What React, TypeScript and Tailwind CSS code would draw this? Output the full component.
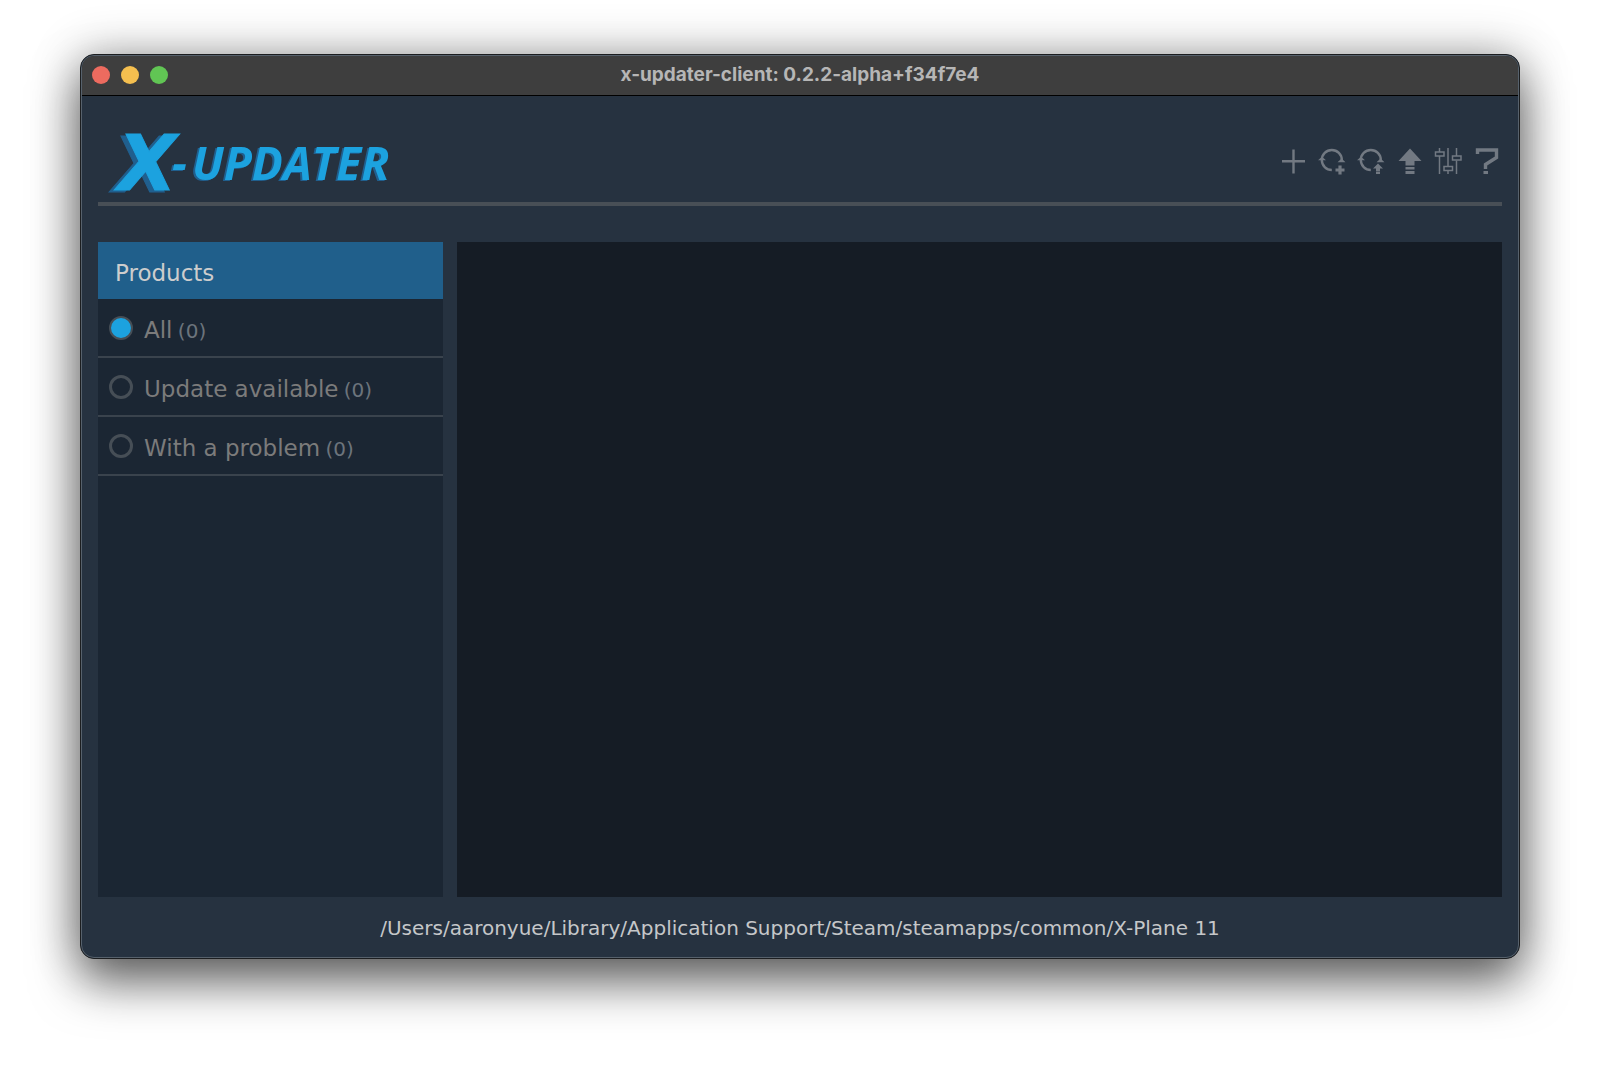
import type { ReactNode } from 'react';

const filters = [
  { id: 'all', label: 'All', count: 0 },
  { id: 'update', label: 'Update available', count: 0 },
  { id: 'problem', label: 'With a problem', count: 0 },
];

function ToolButton({ label, children }: { label: string; children: ReactNode }) {
  return (
    <button type="button" aria-label={label} title={label} className="h-8 w-8">
      <svg viewBox="0 0 32 32" className="h-8 w-8" fill="none" stroke="#727982">
        {children}
      </svg>
    </button>
  );
}

// Open circle with arrow heads on both sides, shared by the two refresh buttons
function CycleArrows() {
  return (
    <g>
      <path d="M7.8 15a10 10 0 0 1 20 0M7.8 15a10 10 0 0 0 10 10" strokeWidth="2.4" />
      <path d="M4 15.2h8L8 11.8zM23.5 17.3h8L27.6 13.5z" fill="#727982" stroke="none" />
    </g>
  );
}

function Logo() {
  return (
    <svg viewBox="0 0 300 82" className="h-[82px] w-[300px] overflow-visible" role="img" aria-label="X-Updater">
      <g fill="#1ca2df" fontWeight="700" fontStyle="italic">
        <text x="20" y="70" fontSize="76" fontFamily="DejaVu Sans, sans-serif" stroke="#1ca2df" strokeWidth="1" className="drop-shadow-[-5px_2px_0_#205f8e]">X</text>
        <g fontSize="46" fontFamily="Open Sans, sans-serif" className="drop-shadow-[-2px_1px_0_#205f8e]">
          <text x="74" y="60">-</text>
          <text x="94" y="60">UPDATER</text>
        </g>
      </g>
    </svg>
  );
}

export default function App() {
  return (
    <div className="flex min-h-screen flex-col bg-white px-20 pt-[54px] pb-[106px] font-['DejaVu_Sans',sans-serif]">
      <div className="flex flex-1 flex-col overflow-hidden rounded-[14px] border border-[#1c1e20] bg-[#263240] shadow-[0_24px_48px_rgba(0,0,0,0.55),0_0_48px_rgba(0,0,0,0.3)]">
        <div className="flex flex-1 flex-col rounded-[13px] border border-[#56616c]">
          {/* Title bar */}
          <div className="grid h-10 grid-cols-[1fr_auto_1fr] items-center rounded-t-xl border-b border-black bg-[#3e3e3e] px-[10px] pb-0.5">
            <div className="flex gap-[11px]">
              <button type="button" aria-label="Close" className="h-[18px] w-[18px] rounded-full bg-[#ed6b5f]" />
              <button type="button" aria-label="Minimize" className="h-[18px] w-[18px] rounded-full bg-[#f5bf4f]" />
              <button type="button" aria-label="Zoom" className="h-[18px] w-[18px] rounded-full bg-[#61c554]" />
            </div>
            <h1 className="font-['Inter',sans-serif] text-[19px] leading-6 font-bold text-[#b6b6b6]">
              x-updater-client: 0.2.2-alpha+f34f7e4
            </h1>
          </div>

          <div className="flex flex-1 flex-col px-4">
            <header className="flex h-[110px] items-center justify-between border-b-4 border-[#484f56] pt-6">
              <Logo />
              <div className="flex gap-[7px]">
                <ToolButton label="Add product">
                  <path d="M7 16.2h23M18.5 4.5v24" strokeWidth="2.4" />
                </ToolButton>
                <ToolButton label="Check for new products">
                  <CycleArrows />
                  <path d="M26 20.5v9M21.5 25h9" strokeWidth="3.2" />
                </ToolButton>
                <ToolButton label="Check for updates">
                  <CycleArrows />
                  <path d="M25 18.5l5 5h-3v2.5h-4v-2.5h-3zM23 26.5h4v2.5h-4z" fill="#727982" stroke="none" />
                </ToolButton>
                <ToolButton label="Update">
                  <path d="M18 3.5L29.5 16H22.5v4.5h-9V16H6.5zM13.5 22h9v2.5h-9zM13.5 26h9v3h-9z" fill="#727982" stroke="none" />
                </ToolButton>
                <ToolButton label="Settings">
                  <path d="M8.5 3v4M8.5 11v18M17 3v18M17 25.5v3.5M25.5 3v8M25.5 15.5v13.5" strokeWidth="1.5" />
                  <path d="M4.5 7h8.5v4H4.5zM13 21.5h8.5v4H13zM21.5 11h8.5v4h-8.5z" strokeWidth="1.5" />
                </ToolButton>
                <ToolButton label="Help">
                  <path d="M7.5 9V5h19v7.5l-11 7v4.5" strokeWidth="3.4" />
                  <path d="M13.5 26h4.5v3h-4.5z" fill="#727982" stroke="none" />
                </ToolButton>
              </div>
            </header>

            <div className="mt-9 flex flex-1 gap-[14px]">
              <aside className="w-[345px] bg-[#1b2633]">
                <h2 className="flex h-[57px] items-center bg-[#205f8b] px-[17px] pt-1 text-[23px] leading-7 text-[#cdcdcd]">
                  Products
                </h2>
                {filters.map((filter, idx) => (
                  <label
                    key={filter.id}
                    className="flex h-[59px] items-center gap-[11px] border-b-2 border-[#3a434d] px-[11px] text-[23px] leading-7 text-[#7b7b7b]"
                  >
                    <input
                      type="radio"
                      name="filter"
                      value={filter.id}
                      defaultChecked={idx === 0}
                      className="h-6 w-6 appearance-none rounded-full border-[3px] border-[#464e56] checked:border-2 checked:bg-[#1ca2df]"
                    />
                    <span className="pt-1.5">
                      {filter.label} <span className="-ml-0.5 text-[20px] text-[#6c747c]">({filter.count})</span>
                    </span>
                  </label>
                ))}
              </aside>
              <main className="flex-1 bg-[#151c25]" />
            </div>

            <footer className="flex h-[60px] items-center justify-center pt-0.5 text-[20px] leading-7 text-[#c5c7c9]">
              /Users/aaronyue/Library/Application Support/Steam/steamapps/common/X-Plane 11
            </footer>
          </div>
        </div>
      </div>
    </div>
  );
}
